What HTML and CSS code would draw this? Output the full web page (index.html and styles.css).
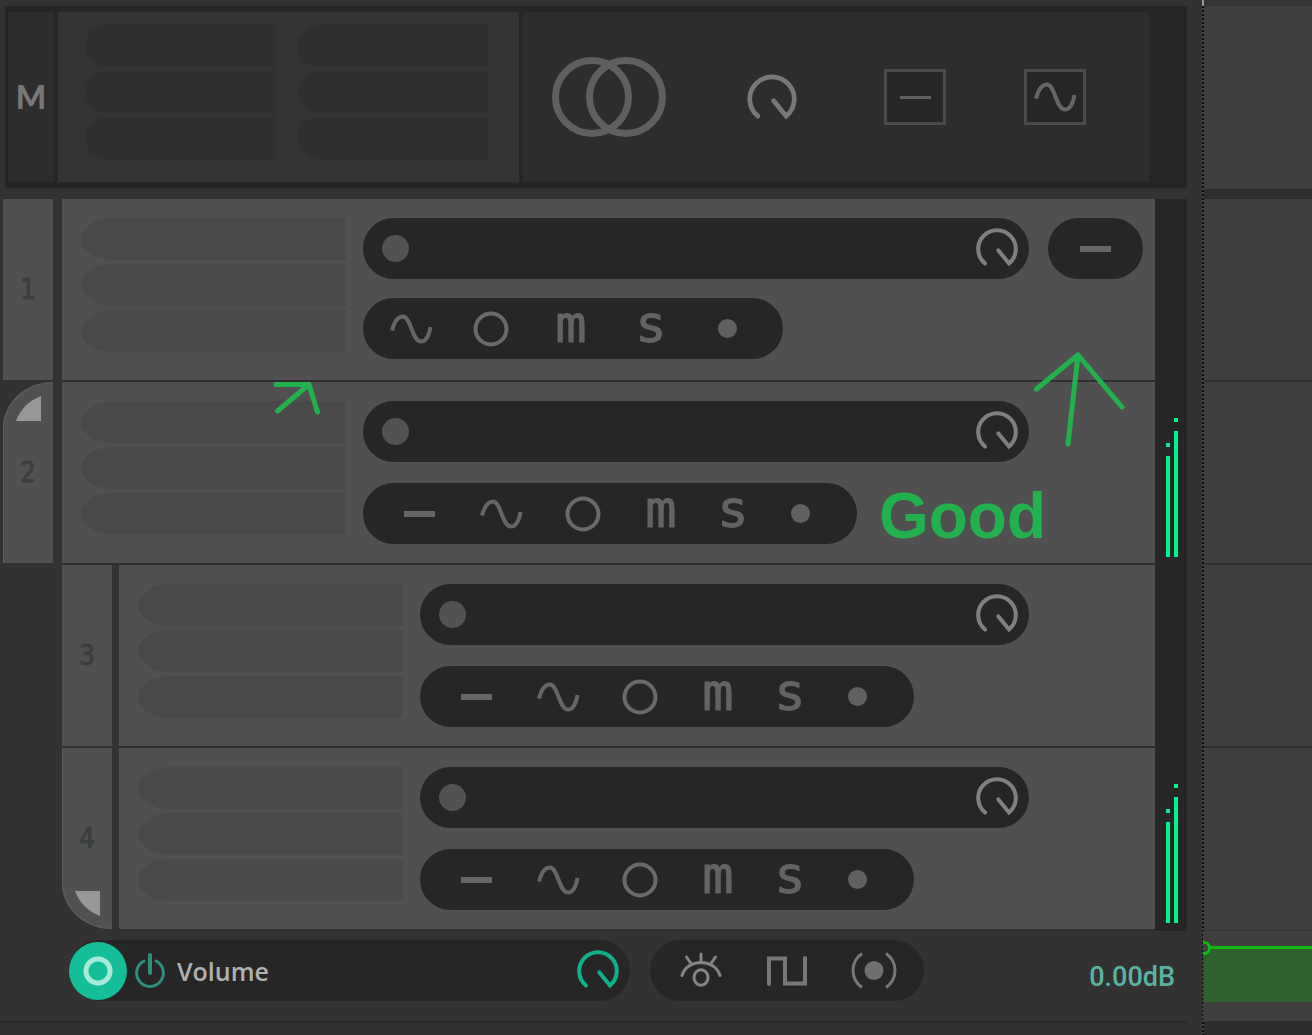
FILE: index.html
```html
<!DOCTYPE html>
<html lang="en">
<head>
    <meta charset="UTF-8">
    <title>Track panel</title>
    <link rel="stylesheet" href="styles.css">
</head>
<body>
    <!-- shared icons -->
    <svg class="defs" aria-hidden="true">
        <symbol id="knob" viewBox="0 0 44 44">
            <path d="M10 36.5A18.8 18.8 0 1 1 34 36.5L23.4 23.4" />
        </symbol>
        <symbol id="wave" viewBox="0 0 44 32">
            <path d="M3 17.500C5 10 9 3.500 14 3.500C22 3.500 23 28.500 32 28.500C37 28.500 40 23 41.500 14" />
        </symbol>
        <symbol id="ring" viewBox="0 0 36 36">
            <circle cx="18" cy="18" r="15.5" />
        </symbol>
    </svg>

    <div class="app">
        <main class="panel">
            <section class="master">
                <div class="master-name">M</div>
                <div class="master-slots">
                    <ul class="slots"><li></li><li></li><li></li></ul>
                    <ul class="slots"><li></li><li></li><li></li></ul>
                </div>
                <div class="master-controls">
                    <button class="rings" aria-label="Stereo">
                        <svg width="116" height="82" viewBox="0 0 116 82">
                            <circle cx="41" cy="41" r="36.5" />
                            <circle cx="75" cy="41" r="36.5" />
                        </svg>
                    </button>
                    <button class="knob big" aria-label="Master volume"><svg><use href="#knob" /></svg></button>
                    <button class="box" aria-label="Master bypass"><span class="thin"></span></button>
                    <button class="box" aria-label="Master envelope"><svg class="wave"><use href="#wave" /></svg></button>
                </div>
            </section>

            <section class="tracks">
                <div class="track short">
                    <div class="number">1</div>
                    <div class="body">
                        <ul class="slots"><li></li><li></li><li></li></ul>
                        <div class="controls">
                            <div class="pill name">
                                <button class="rec" aria-label="Record arm 1"></button>
                                <input type="text" aria-label="Track 1 name">
                                <button class="knob" aria-label="Volume 1"><svg><use href="#knob" /></svg></button>
                            </div>
                            <button class="pill single" aria-label="Effects 1"><span class="dash"></span></button>
                            <div class="pill tools">
                                <button aria-label="Envelope 1"><svg class="wave"><use href="#wave" /></svg></button>
                                <button aria-label="Phase 1"><svg class="ring"><use href="#ring" /></svg></button>
                                <button class="mute">m</button>
                                <button class="solo">s</button>
                                <button class="last" aria-label="Monitor 1"><span class="dot"></span></button>
                            </div>
                        </div>
                    </div>
                    <div class="meter"></div>
                </div>

                <div class="track">
                    <div class="number first">
                        <svg class="fold" viewBox="0 0 25 25"><path d="M0 25A44 42 0 0 1 25 0V25Z" /></svg>2
                    </div>
                    <div class="body">
                        <ul class="slots"><li></li><li></li><li></li></ul>
                        <div class="controls">
                            <div class="pill name">
                                <button class="rec" aria-label="Record arm 2"></button>
                                <input type="text" aria-label="Track 2 name">
                                <button class="knob" aria-label="Volume 2"><svg><use href="#knob" /></svg></button>
                            </div>
                            <div class="pill tools">
                                <button aria-label="Effects 2"><span class="dash"></span></button>
                                <button aria-label="Envelope 2"><svg class="wave"><use href="#wave" /></svg></button>
                                <button aria-label="Phase 2"><svg class="ring"><use href="#ring" /></svg></button>
                                <button class="mute">m</button>
                                <button class="solo">s</button>
                                <button class="last" aria-label="Monitor 2"><span class="dot"></span></button>
                            </div>
                        </div>
                    </div>
                    <div class="meter">
                        <div class="level left"></div>
                        <div class="level right"></div>
                    </div>
                </div>

                <div class="track child">
                    <div class="number">3</div>
                    <div class="body">
                        <ul class="slots"><li></li><li></li><li></li></ul>
                        <div class="controls">
                            <div class="pill name">
                                <button class="rec" aria-label="Record arm 3"></button>
                                <input type="text" aria-label="Track 3 name">
                                <button class="knob" aria-label="Volume 3"><svg><use href="#knob" /></svg></button>
                            </div>
                            <div class="pill tools">
                                <button aria-label="Effects 3"><span class="dash"></span></button>
                                <button aria-label="Envelope 3"><svg class="wave"><use href="#wave" /></svg></button>
                                <button aria-label="Phase 3"><svg class="ring"><use href="#ring" /></svg></button>
                                <button class="mute">m</button>
                                <button class="solo">s</button>
                                <button class="last" aria-label="Monitor 3"><span class="dot"></span></button>
                            </div>
                        </div>
                    </div>
                    <div class="meter"></div>
                </div>

                <div class="track child">
                    <div class="number end">
                        <svg class="fold" viewBox="0 0 25 25"><path d="M0 0A44 42 0 0 0 25 25V0Z" /></svg>4
                    </div>
                    <div class="body">
                        <ul class="slots"><li></li><li></li><li></li></ul>
                        <div class="controls">
                            <div class="pill name">
                                <button class="rec" aria-label="Record arm 4"></button>
                                <input type="text" aria-label="Track 4 name">
                                <button class="knob" aria-label="Volume 4"><svg><use href="#knob" /></svg></button>
                            </div>
                            <div class="pill tools">
                                <button aria-label="Effects 4"><span class="dash"></span></button>
                                <button aria-label="Envelope 4"><svg class="wave"><use href="#wave" /></svg></button>
                                <button aria-label="Phase 4"><svg class="ring"><use href="#ring" /></svg></button>
                                <button class="mute">m</button>
                                <button class="solo">s</button>
                                <button class="last" aria-label="Monitor 4"><span class="dot"></span></button>
                            </div>
                        </div>
                    </div>
                    <div class="meter">
                        <div class="level left"></div>
                        <div class="level right"></div>
                    </div>
                </div>
            </section>

            <section class="envelope">
                <div class="pill env-name">
                    <button class="arm" aria-label="Arm envelope"></button>
                    <button class="power" aria-label="Bypass envelope">
                        <svg width="34" height="36" viewBox="0 0 34 36">
                            <path d="M11 8A13.4 13.4 0 1 0 23 8" />
                            <path class="stick" d="M17 2V20" />
                        </svg>
                    </button>
                    <span class="env-title">Volume</span>
                    <button class="knob green" aria-label="Envelope value"><svg><use href="#knob" /></svg></button>
                </div>
                <div class="pill env-tools">
                    <button aria-label="Show in lane">
                        <svg width="44" height="40" viewBox="0 0 44 40">
                            <path d="M3 24.500C8 7 36 7 41 24.500M22 3V11M7.500 6L12 12.500M36.500 6L32 12.500" />
                            <ellipse cx="22" cy="26.500" rx="7" ry="7.800" />
                        </svg>
                    </button>
                    <button aria-label="Shape">
                        <svg class="square" width="44" height="40" viewBox="0 0 44 40">
                            <path d="M4 33V7.500H20V32.500H40V7" />
                        </svg>
                    </button>
                    <button aria-label="Learn">
                        <svg class="learn" width="48" height="40" viewBox="0 0 48 40">
                            <path d="M13 2.500C1 11 1 28 13 36.500M37 2.500C49 11 49 28 37 36.500" />
                            <circle cx="25" cy="19.500" r="9.500" />
                        </svg>
                    </button>
                </div>
                <output class="env-value">0.00dB</output>
            </section>

            <!-- hand drawn notes over the tracks -->
            <svg class="note small" width="50" height="36" viewBox="0 0 50 36">
                <path d="M6 5.500H39L47.500 33M39 5.500L7.500 32" />
            </svg>
            <svg class="note large" width="94" height="98" viewBox="0 0 94 98">
                <path d="M5.500 38L47 4L91 56M47 4L37 93" />
            </svg>
            <span class="note good">Good</span>
        </main>

        <aside class="arrange">
            <div class="lane-master"></div>
            <div class="lane"></div>
            <div class="lane"></div>
            <div class="lane"></div>
            <div class="lane"></div>
            <div class="lane-env">
                <svg class="point" width="9" height="16" viewBox="0 0 9 16"><circle cx="1" cy="8" r="5.500" /></svg>
                <div class="fill"></div>
            </div>
        </aside>
    </div>
</body>
</html>
```

FILE: styles.css
```css
* {
    margin: 0;
    padding: 0;
    box-sizing: border-box;
    list-style: none;
}
body {
    background-color: #323232;
    font-family: "DejaVu Sans Condensed", "DejaVu Sans", sans-serif;
}
button, input {
    border: none;
    background: none;
    color: inherit;
    font: inherit;
}
button {
    display: flex;
    align-items: center;
    justify-content: center;
    flex-shrink: 0;
}
svg {
    display: block;
    fill: none;
    stroke-linecap: round;
}
.defs {
    position: absolute;
    width: 0;
    height: 0;
}
.app {
    display: grid;
    grid-template-columns: minmax(0, 1fr) 109px;
    column-gap: 16px;
    min-height: 100vh;
}
.panel {
    position: relative;
    padding-top: 6px;
}

/* master */
.master {
    display: flex;
    gap: 4px;
    margin: 0 0 11px 5px;
    padding: 6px 38px 6px 3px;
    background-color: #262626;
}
.master-name {
    display: flex;
    align-items: center;
    justify-content: center;
    width: 46px;
    background-color: #2d2d2d;
    color: #777;
    font: 900 32px/34px Lato, sans-serif;
}
.master-slots {
    display: flex;
    gap: 21px;
    width: 461px;
    padding: 13px 31px 23px 27px;
    background-color: #333;
}
.master-slots .slots {
    flex: 1;
}
.master-slots .slots li {
    background-color: #2f2f2f;
    border-radius: 24px 0 0 24px / 21px 0 0 21px;
}
.master-controls {
    flex: 1;
    display: grid;
    grid-template-columns: 172fr 154fr 132fr 148fr;
    align-items: center;
    justify-items: center;
    padding-right: 20px;
    background-color: #2d2d2d;
}
.rings svg {
    stroke: #5f5f5f;
    stroke-width: 7;
}
.box {
    width: 62px;
    height: 56px;
    border: 3px solid #4a4a4a;
    background-color: #262626;
}
.thin {
    width: 31px;
    height: 3px;
    background-color: #606060;
}

/* shared parts */
.slots {
    display: flex;
    flex-direction: column;
    gap: 4px;
}
.slots li {
    height: 42px;
    background-color: #4a4a4a;
    border-radius: 32px 0 0 32px / 21px 0 0 21px;
}
.knob svg {
    width: 44px;
    height: 44px;
    stroke: #808080;
    stroke-width: 4;
}
.knob.big {
    padding-top: 4px;
}
.knob.big svg {
    width: 52px;
    height: 52px;
    stroke: #787878;
}
.knob.green svg {
    stroke: #12b08a;
}
.wave {
    width: 44px;
    height: 32px;
    stroke: #666;
    stroke-width: 4;
    stroke-linecap: butt;
}
.ring {
    width: 36px;
    height: 36px;
    stroke: #6a6a6a;
    stroke-width: 4;
}
.dash {
    width: 31px;
    height: 6px;
    background-color: #666;
}
.dot {
    width: 19px;
    height: 19px;
    border-radius: 50%;
    background-color: #606060;
}
.pill {
    display: flex;
    align-items: center;
    height: 61px;
    border-radius: 31px;
    background-color: #262626;
}

/* tracks */
.track {
    display: flex;
    height: 183px;
    padding-left: 3px;
}
.number {
    position: relative;
    display: flex;
    align-items: center;
    justify-content: center;
    width: 50px;
    margin: 0 9px 2px 0;
    background-color: #505050;
    color: #3b403f;
    font-size: 28px;
    -webkit-text-stroke: 1px #3b403f;
}
.number.first {
    border-radius: 50px 0 0 0 / 46px 0 0 0;
    box-shadow: inset 1px 1px #5c5c5c;
}
.number.end {
    border-radius: 0 0 0 50px / 0 0 0 46px;
    box-shadow: inset 1px -1px #5c5c5c;
}
.fold {
    position: absolute;
    top: 14px;
    left: 13px;
    width: 25px;
    height: 25px;
    fill: #979797;
    stroke: none;
}
.end .fold {
    top: auto;
    bottom: 13px;
}
.child .number {
    margin-left: 59px;
    margin-right: 7px;
}
.body {
    flex: 1;
    display: flex;
    gap: 17px;
    padding: 19px 12px 0 19px;
    border-bottom: 2px solid #2e2e2e;
    background-color: #505050;
}
.body .slots {
    width: 265px;
}
.controls {
    flex: 1;
    display: grid;
    grid-template-columns: minmax(0, 1fr) 95px;
    grid-template-rows: 61px 61px;
    gap: 21px 19px;
}
.short .controls {
    row-gap: 19px;
}
.name {
    grid-column: 1;
    padding: 0 10px 0 19px;
}
.name input {
    flex: 1;
    min-width: 0;
    height: 40px;
    padding: 0 16px;
    color: #aaa;
    font-size: 26px;
}
.rec {
    width: 27px;
    height: 27px;
    border-radius: 50%;
    background-color: #525252;
}
.single {
    justify-content: center;
}
.tools {
    grid-row: 2;
    justify-self: start;
    padding: 0 24px 0 15px;
    color: #636363;
    font: 52px/52px "DejaVu Sans Mono", monospace;
    -webkit-text-stroke: 1px #636363;
}
.tools button {
    width: 82px;
    height: 61px;
}
.tools .mute,
.tools .solo {
    padding-bottom: 9px;
}
.tools .mute {
    width: 74px;
}
.tools .solo {
    width: 70px;
}
.tools .last {
    width: 65px;
}
.short .tools {
    padding: 0 19px 0 8px;
}
.short .tools button {
    width: 80px;
}
.short .tools .last {
    width: 73px;
}

/* meters */
.meter {
    display: flex;
    align-items: flex-end;
    gap: 4px;
    width: 32px;
    padding: 0 0 8px 11px;
    background-color: #262626;
}
.level {
    width: 4px;
    border-top: 4px solid #00f58f;
    background: linear-gradient(#262626, #262626) top / 100% 9px no-repeat, #00f58f;
}
.level.left {
    height: 114px;
}
.level.right {
    height: 139px;
}

/* envelope row */
.envelope {
    display: flex;
    align-items: center;
    gap: 20px;
    height: 92px;
    padding: 9px 12px 20px 69px;
    border-bottom: 2px solid #282828;
}
.env-name {
    flex: 0 1 561px;
    padding-right: 10px;
}
.arm {
    width: 58px;
    height: 58px;
    border-radius: 50%;
    background: radial-gradient(circle, #15bd98 9px, #a9e9da 10px, #a9e9da 14px, #15bd98 15px);
}
.power {
    width: 46px;
    height: 46px;
}
.power svg {
    stroke: #2f8f7e;
    stroke-width: 3;
}
.power .stick {
    stroke-width: 4;
}
.env-title {
    flex: 1;
    padding-left: 4px;
    color: #b0b0b0;
    font: 600 25px/30px "Open Sans", sans-serif;
}
.env-tools {
    padding: 0 8px;
}
.env-tools button {
    width: 86px;
    height: 61px;
}
.env-tools svg {
    stroke: #858585;
    stroke-width: 3;
}
.env-tools .square {
    stroke: #777;
    stroke-width: 4;
}
.env-tools .learn {
    stroke: #777;
    stroke-linecap: butt;
}
.env-tools .learn circle {
    fill: #707070;
    stroke: none;
}
.env-value {
    margin-left: auto;
    padding-top: 12px;
    color: #5bb3a4;
    font: 500 27px/30px Roboto, sans-serif;
}

/* notes */
.note {
    position: absolute;
    stroke: #22b14c;
    stroke-width: 5;
    stroke-linejoin: round;
    pointer-events: none;
}
.note.small {
    top: 379px;
    left: 270px;
}
.note.large {
    top: 351px;
    right: 62px;
}
.note.good {
    top: 484px;
    right: 141px;
    color: #22b14c;
    font: bold 64px/64px "Liberation Sans", Arial, sans-serif;
    stroke: none;
}

/* arrange view */
.arrange {
    position: relative;
    border-top: 6px solid #353535;
    background-color: #2d2d2d;
}
.arrange::before {
    content: "";
    position: absolute;
    top: 0;
    bottom: 0;
    left: -1px;
    width: 2px;
    background: repeating-linear-gradient(#0a0a0a 0, #0a0a0a 2px, #444 2px, #444 4px);
}
.arrange::after {
    content: "";
    position: absolute;
    top: -6px;
    left: -1px;
    width: 2px;
    height: 6px;
    background-color: #999;
}
.lane-master {
    height: 183px;
    margin-bottom: 10px;
    background-color: #3e3e3e;
}
.lane {
    height: 183px;
    border-bottom: 2px solid #2e2e2e;
    background-color: #3e3e3e;
}
.lane:nth-child(5) {
    border-bottom-color: #393939;
}
.lane-env {
    position: relative;
    height: 90px;
    padding: 15px 0 19px;
    background-color: #3f3f3f;
}
.fill {
    height: 56px;
    margin-left: 1px;
    border-top: 3px solid #12b812;
    background-color: #2d622d;
}
.point {
    position: absolute;
    top: 9px;
    left: 0;
    fill: #3f3f3f;
    stroke: #12b812;
    stroke-width: 3;
}
```
